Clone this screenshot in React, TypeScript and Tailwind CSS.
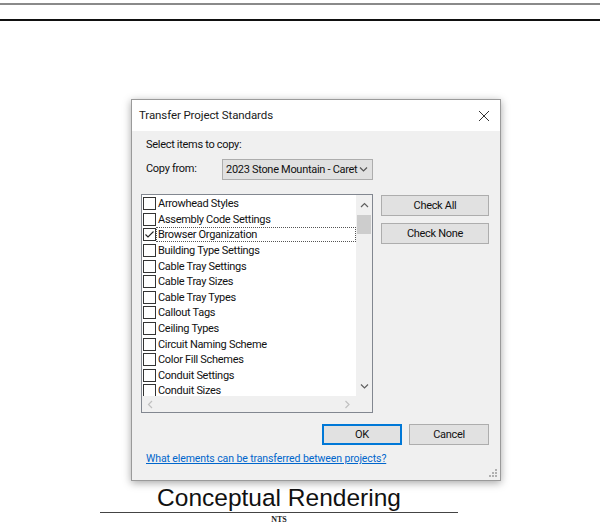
import React from 'react';

const items = [
  'Arrowhead Styles',
  'Assembly Code Settings',
  'Browser Organization',
  'Building Type Settings',
  'Cable Tray Settings',
  'Cable Tray Sizes',
  'Cable Tray Types',
  'Callout Tags',
  'Ceiling Types',
  'Circuit Naming Scheme',
  'Color Fill Schemes',
  'Conduit Settings',
  'Conduit Sizes',
];

const Chevron: React.FC<{ dir: 'up' | 'down' | 'left' | 'right'; color?: string }> = ({ dir, color = '#606060' }) => {
  const paths = {
    up: 'M1 6 L4.5 2.5 L8 6',
    down: 'M1 2.5 L4.5 6 L8 2.5',
    left: 'M6 1 L2.5 4.5 L6 8',
    right: 'M2.5 1 L6 4.5 L2.5 8',
  };
  return (
    <svg width="9" height="9" viewBox="0 0 9 9" fill="none">
      <path d={paths[dir]} stroke={color} strokeWidth="1.2" />
    </svg>
  );
};

const Row: React.FC<{ label: string; checked?: boolean; focused?: boolean }> = ({ label, checked, focused }) => (
  <div className="flex items-center h-[15.6px] pl-[1px]">
    <div className="w-[13px] h-[13px] border border-[#333] bg-white flex items-center justify-center shrink-0">
      {checked && (
        <svg width="11" height="11" viewBox="0 0 11 11" fill="none">
          <path d="M1.5 5.5 L4 8 L9.5 2.5" stroke="#222" strokeWidth="1.1" />
        </svg>
      )}
    </div>
    <span
      className={`pl-[1px] h-[15px] flex items-center flex-1 leading-none whitespace-nowrap ${
        focused ? 'border border-dotted border-[#555]' : 'border border-transparent'
      }`}
    >
      {label}
    </span>
  </div>
);

const App: React.FC = () => {
  return (
    <div className="w-[600px] h-[531px] bg-white overflow-hidden relative font-['Roboto',sans-serif] text-[11px] tracking-[-0.3px] text-[#111]">
      {/* drawing sheet lines */}
      <div className="h-[3px]" />
      <div className="h-[2px] bg-[#8a8a8a]" />
      <div className="h-[14px]" />
      <div className="h-[2px] bg-[#111]" />
      <div className="h-[78px]" />

      {/* dialog */}
      <div className="ml-[131px] w-[370px] h-[382px] border border-[#9a9a9a] bg-[#f0f0f0] shadow-[0_2px_8px_rgba(0,0,0,0.35)] flex flex-col relative">
        <div className="h-[31px] bg-white flex items-center justify-between pl-[7px] pr-[10px] shrink-0">
          <span className="text-[11.5px] tracking-[-0.1px] text-[#1a1a1a]">Transfer Project Standards</span>
          <svg width="12" height="12" viewBox="0 0 12 12" fill="none">
            <path d="M1 1 L11 11 M11 1 L1 11" stroke="#333" strokeWidth="1" />
          </svg>
        </div>

        <div className="flex flex-col pl-[9px] pr-[11px]">
          <div className="pl-[5px] mt-[6px] h-[16px] leading-[16px]">Select items to copy:</div>
          <div className="flex items-center mt-[6px] h-[21px]">
            <span className="pl-[5px] w-[81px]">Copy from:</span>
            <div className="w-[151px] h-[21px] bg-[#e1e1e1] border border-[#adadad] flex items-center justify-between pl-[3px] pr-[4px]">
              <span className="leading-none whitespace-nowrap">2023 Stone Mountain - Caret</span>
              <Chevron dir="down" color="#555" />
            </div>
          </div>

          <div className="flex mt-[14px]">
            {/* list box */}
            <div className="w-[232px] h-[219px] border border-[#828790] bg-white flex flex-col">
              <div className="flex flex-1 min-h-0">
                <div className="flex-1 overflow-hidden pt-[1px]">
                  {items.map((it) => (
                    <Row key={it} label={it} checked={it === 'Browser Organization'} focused={it === 'Browser Organization'} />
                  ))}
                </div>
                <div className="w-[16px] bg-[#f0f0f0] flex flex-col">
                  <div className="h-[20px] flex items-center justify-center">
                    <Chevron dir="up" />
                  </div>
                  <div className="h-[19px] bg-[#cdcdcd] mx-[1px]" />
                  <div className="flex-1" />
                  <div className="h-[20px] flex items-center justify-center">
                    <Chevron dir="down" />
                  </div>
                </div>
              </div>
              <div className="h-[16px] flex bg-[#f0f0f0]">
                <div className="flex-1 flex items-center justify-between px-[4px]">
                  <Chevron dir="left" color="#c0c0c0" />
                  <Chevron dir="right" color="#c0c0c0" />
                </div>
                <div className="w-[16px] bg-[#f0f0f0]" />
              </div>
            </div>

            {/* side buttons */}
            <div className="ml-[8px] flex flex-col gap-[7px] pt-[1px]">
              <button className="w-[108px] h-[21px] bg-[#e1e1e1] border border-[#adadad] leading-none">Check All</button>
              <button className="w-[108px] h-[21px] bg-[#e1e1e1] border border-[#adadad] leading-none">Check None</button>
            </div>
          </div>

          <div className="flex justify-end gap-[7px] mt-[11px]">
            <button className="w-[80px] h-[21px] bg-[#e1e1e1] border-2 border-[#0078d7] leading-none">OK</button>
            <button className="w-[80px] h-[21px] bg-[#e1e1e1] border border-[#adadad] leading-none">Cancel</button>
          </div>

          <div className="pl-[5px] mt-[6px] text-[10.5px] tracking-[-0.1px] text-[#0066cc] underline leading-[16px]">
            What elements can be transferred between projects?
          </div>
        </div>

        {/* resize grip */}
        <svg className="absolute right-[2px] bottom-[2px]" width="10" height="10" viewBox="0 0 10 10">
          <rect x="7" y="1" width="2" height="2" fill="#b0b0b0" />
          <rect x="4" y="4" width="2" height="2" fill="#b0b0b0" />
          <rect x="7" y="4" width="2" height="2" fill="#b0b0b0" />
          <rect x="1" y="7" width="2" height="2" fill="#b0b0b0" />
          <rect x="4" y="7" width="2" height="2" fill="#b0b0b0" />
          <rect x="7" y="7" width="2" height="2" fill="#b0b0b0" />
        </svg>
      </div>

      {/* title block */}
      <div className="ml-[100px] w-[358px] flex flex-col items-center">
        <div className="font-['Liberation_Sans',Arial,sans-serif] text-[24.5px] tracking-normal leading-[28px] text-[#111] mt-[3px]">
          Conceptual Rendering
        </div>
        <div className="w-full h-[1px] bg-[#444]" />
        <div className="font-['Liberation_Serif',serif] text-[8px] tracking-normal font-bold leading-[12px] text-[#222] mt-[1px]">NTS</div>
      </div>
    </div>
  );
};

export default App;
